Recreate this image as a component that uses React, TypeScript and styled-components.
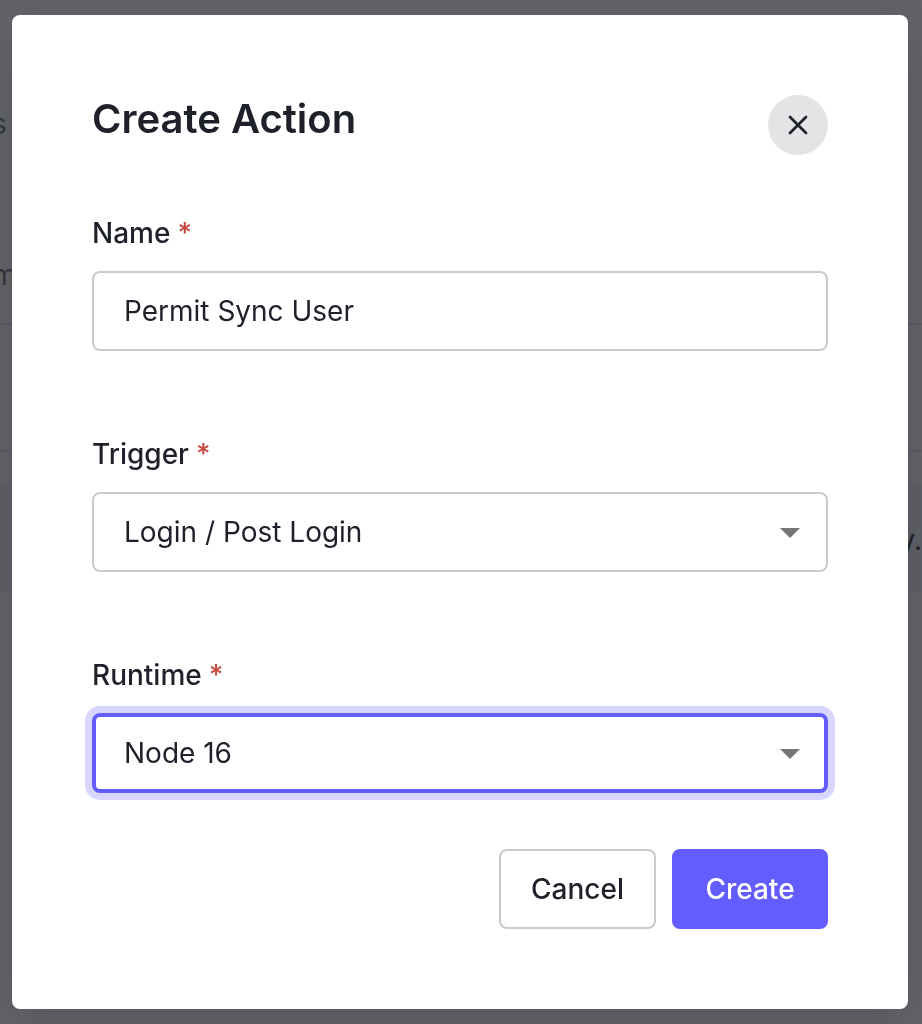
import React, { useState } from "react";
import styled, { createGlobalStyle } from "styled-components";

const GlobalStyle = createGlobalStyle`
  *, *::before, *::after { box-sizing: border-box; }
  body {
    margin: 0;
    background: #ffffff;
    color: #1e212a;
    font-family: Inter, "Liberation Sans", sans-serif;
    font-optical-sizing: none;
  }
  button, input, select { font: inherit; font-optical-sizing: none; color: inherit; }
`;

const Page = styled.div`
  min-height: 100vh;
  overflow: hidden;
  font-size: 28px;
  line-height: 40px;
  color: #65676e;
`;

const PageRow = styled.div<{ $height: number; $divided?: boolean; $tinted?: boolean }>`
  display: flex;
  align-items: flex-end;
  height: ${(p) => p.$height}px;
  padding-bottom: 28px;
  border-bottom: ${(p) => (p.$divided ? "2px solid #e3e4e6" : "0")};
  background: ${(p) => (p.$tinted ? "#eff2f5" : "transparent")};
`;

const PageText = styled.span`
  margin-left: -8px;
`;

const RowNote = styled.span`
  margin-left: auto;
  padding-bottom: 4px;
  color: #1e212a;
`;

const Overlay = styled.div`
  position: fixed;
  inset: 0;
  overflow: auto;
  padding: 15px 14px 15px 12px;
  background: rgba(30, 33, 42, 0.7);
`;

const Dialog = styled.form`
  padding: 80px;
  border-radius: 8px;
  background: #ffffff;
  box-shadow: 0 12px 40px rgba(0, 0, 0, 0.12);
`;

const Header = styled.header`
  display: flex;
  justify-content: space-between;
  align-items: flex-start;
  margin-bottom: 56px;
`;

const Title = styled.h1`
  margin: 0;
  font-size: 40px;
  font-weight: 600;
  line-height: 48px;
`;

const CloseButton = styled.button`
  display: grid;
  place-items: center;
  width: 60px;
  height: 60px;
  padding: 0;
  border: 0;
  border-radius: 50%;
  background: #e3e4e6;
  cursor: pointer;
`;

const Fields = styled.div`
  display: grid;
  gap: 81px;
`;

const Field = styled.div`
  display: grid;
  gap: 16px;
`;

const Label = styled.label`
  display: flex;
  gap: 7px;
  font-size: 28px;
  font-weight: 500;
  line-height: 44px;
`;

const Required = styled.span`
  color: #c8473e;
`;

const TextInput = styled.input`
  width: 100%;
  height: 80px;
  padding: 0 30px;
  border: 2px solid #c9cace;
  border-radius: 8px;
  background: #ffffff;
  font-size: 28px;
  outline: none;
`;

const SelectWrap = styled.div`
  position: relative;
`;

const Select = styled.select<{ $active?: boolean }>`
  display: block;
  appearance: none;
  width: 100%;
  height: 80px;
  padding: 0 ${(p) => (p.$active ? 28 : 30)}px;
  border: ${(p) => (p.$active ? "4px solid #635dff" : "2px solid #c9cace")};
  border-radius: 8px;
  background: #ffffff;
  box-shadow: ${(p) => (p.$active ? "0 0 0 7px #d8d6ff" : "none")};
  font-size: 28px;
  outline: none;
`;

const Caret = styled.svg`
  position: absolute;
  top: 36px;
  right: 28px;
  pointer-events: none;
`;

const Actions = styled.footer`
  display: flex;
  justify-content: flex-end;
  gap: 16px;
  margin-top: 56px;
`;

const Button = styled.button<{ $primary?: boolean }>`
  height: 80px;
  min-width: 156px;
  padding: 0 30px;
  border: 2px solid ${(p) => (p.$primary ? "#635dff" : "#c9cace")};
  border-radius: 8px;
  background: ${(p) => (p.$primary ? "#635dff" : "#ffffff")};
  color: ${(p) => (p.$primary ? "#ffffff" : "#1e212a")};
  font-size: 28px;
  font-weight: 500;
  cursor: pointer;
`;

type SelectFieldProps = { id: string; label: string; options: string[]; active?: boolean };

function SelectField({ id, label, options, active }: SelectFieldProps) {
  return (
    <Field>
      <Label htmlFor={id}>
        {label} <Required>*</Required>
      </Label>
      <SelectWrap>
        <Select id={id} $active={active} defaultValue={options[0]}>
          {options.map((option) => (
            <option key={option}>{option}</option>
          ))}
        </Select>
        <Caret width="20" height="10" viewBox="0 0 20 10" aria-hidden="true">
          <path d="M0 0H20L10 10Z" fill="#757575" />
        </Caret>
      </SelectWrap>
    </Field>
  );
}

export default function App() {
  const [name, setName] = useState("Permit Sync User");

  return (
    <>
      <GlobalStyle />
      <Page aria-hidden="true">
        <PageRow $height={172}>
          <PageText>s</PageText>
        </PageRow>
        <PageRow $height={153} $divided>
          <PageText>m</PageText>
        </PageRow>
        <PageRow $height={127} $divided />
        <PageRow $height={32} />
        <PageRow $height={108} $tinted>
          <RowNote>y.</RowNote>
        </PageRow>
      </Page>
      <Overlay>
        <Dialog role="dialog" aria-modal="true" aria-labelledby="dialog-title" onSubmit={(e) => e.preventDefault()}>
          <Header>
            <Title id="dialog-title">Create Action</Title>
            <CloseButton type="button" aria-label="Close">
              <svg width="20" height="20" viewBox="0 0 20 20" fill="none" aria-hidden="true">
                <path d="M2 2L18 18M18 2L2 18" stroke="#1e212a" strokeWidth="2.7" strokeLinecap="round" />
              </svg>
            </CloseButton>
          </Header>
          <Fields>
            <Field>
              <Label htmlFor="name">
                Name <Required>*</Required>
              </Label>
              <TextInput id="name" type="text" value={name} onChange={(e) => setName(e.target.value)} />
            </Field>
            <SelectField id="trigger" label="Trigger" options={["Login / Post Login"]} />
            <SelectField id="runtime" label="Runtime" options={["Node 16"]} active />
          </Fields>
          <Actions>
            <Button type="button">Cancel</Button>
            <Button type="submit" $primary>
              Create
            </Button>
          </Actions>
        </Dialog>
      </Overlay>
    </>
  );
}
